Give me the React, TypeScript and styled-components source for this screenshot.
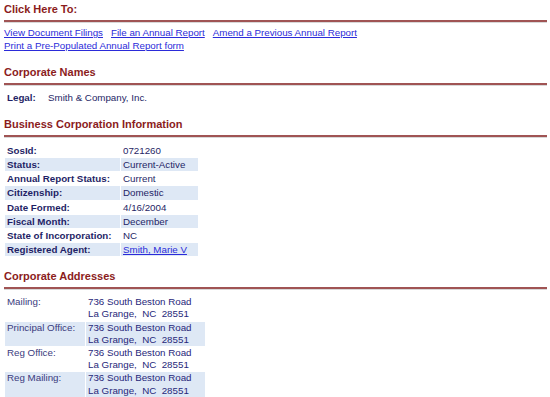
import React from "react";
import styled, { createGlobalStyle } from "styled-components";

const Global = createGlobalStyle`
  html, body { margin: 0; padding: 0; background: #fff; }
  body { font-family: "Liberation Sans", Arial, sans-serif; font-size: 9.75px; color: #1f1f66; }
`;

const Page = styled.div`
  padding: 3px 3px 0 4px;
  display: flex;
  flex-direction: column;
`;

const Section = styled.section<{ $gap?: number }>`
  display: flex;
  flex-direction: column;
  align-items: flex-start;
  margin-bottom: ${(p) => p.$gap ?? 14}px;
`;

const Heading = styled.h2`
  align-self: stretch;
  margin: 0 0 6px;
  font-size: 11px;
  font-weight: bold;
  color: #8b1c1c;
  line-height: 13px;
  padding-bottom: 4px;
  border-bottom: 2px solid #a05454;
  box-shadow: 0 1px 0 #d8d8d8;
`;

const LinkRow = styled.div`
  display: flex;
  flex-wrap: wrap;
  column-gap: 8px;
  line-height: 13px;
  width: 380px;
  margin-top: -2px;
`;

const Link = styled.a`
  color: #2b2bd9;
  text-decoration: underline;
  cursor: pointer;
`;

const LegalRow = styled.div`
  display: flex;
  padding-left: 3px;
  margin-top: 1px;
  line-height: 12px;
`;

const LegalLabel = styled.span`
  font-weight: bold;
  width: 41px;
`;

const Table = styled.table`
  border-collapse: separate;
  border-spacing: 1px;
  margin-left: 0;
`;

const Row = styled.tr``;

const Cell = styled.td<{ $shade?: boolean; $bold?: boolean; $w?: number }>`
  padding: 0 2px;
  background: ${(p) => (p.$shade ? "#dee8f5" : "transparent")};
  font-weight: ${(p) => (p.$bold ? "bold" : "normal")};
  width: ${(p) => (p.$w ? `${p.$w}px` : "auto")};
  height: 13.15px;
  line-height: 13.15px;
  vertical-align: top;
  white-space: nowrap;
`;

const AddrCell = styled(Cell)`
  height: auto;
  line-height: 12.2px;
  padding: 0 2px;
  color: #27277a;
`;

const AddrLabel = styled(AddrCell)`
  color: #3b3b7e;
`;

const info: [string, React.ReactNode][] = [
  ["SosId:", "0721260"],
  ["Status:", "Current-Active"],
  ["Annual Report Status:", "Current"],
  ["Citizenship:", "Domestic"],
  ["Date Formed:", "4/16/2004"],
  ["Fiscal Month:", "December"],
  ["State of Incorporation:", "NC"],
  ["Registered Agent:", <Link key="a">Smith, Marie V</Link>],
];

const addresses = ["Mailing:", "Principal Office:", "Reg Office:", "Reg Mailing:"];

export default function App() {
  return (
    <>
      <Global />
      <Page>
        <Section $gap={14}>
          <Heading>Click Here To:</Heading>
          <LinkRow>
            <Link>View Document Filings</Link>
            <Link>File an Annual Report</Link>
            <Link>Amend a Previous Annual Report</Link>
            <Link>Print a Pre-Populated Annual Report form</Link>
          </LinkRow>
        </Section>
        <Section $gap={14}>
          <Heading>Corporate Names</Heading>
          <LegalRow>
            <LegalLabel>Legal:</LegalLabel>
            <span>Smith &amp; Company, Inc.</span>
          </LegalRow>
        </Section>
        <Section $gap={13}>
          <Heading>Business Corporation Information</Heading>
          <Table>
            <tbody>
              {info.map(([k, v], i) => (
                <Row key={k}>
                  <Cell $bold $shade={i % 2 === 1} $w={111}>{k}</Cell>
                  <Cell $shade={i % 2 === 1} $w={73}>{v}</Cell>
                </Row>
              ))}
            </tbody>
          </Table>
        </Section>
        <Section>
          <Heading>Corporate Addresses</Heading>
          <Table>
            <tbody>
              {addresses.map((k, i) => (
                <Row key={k}>
                  <AddrLabel $shade={i % 2 === 1} $w={76}>{k}</AddrLabel>
                  <AddrCell $shade={i % 2 === 1} $w={115}>
                    736 South Beston Road
                    <br />
                    La Grange,&nbsp; NC&nbsp; 28551
                  </AddrCell>
                </Row>
              ))}
            </tbody>
          </Table>
        </Section>
      </Page>
    </>
  );
}
